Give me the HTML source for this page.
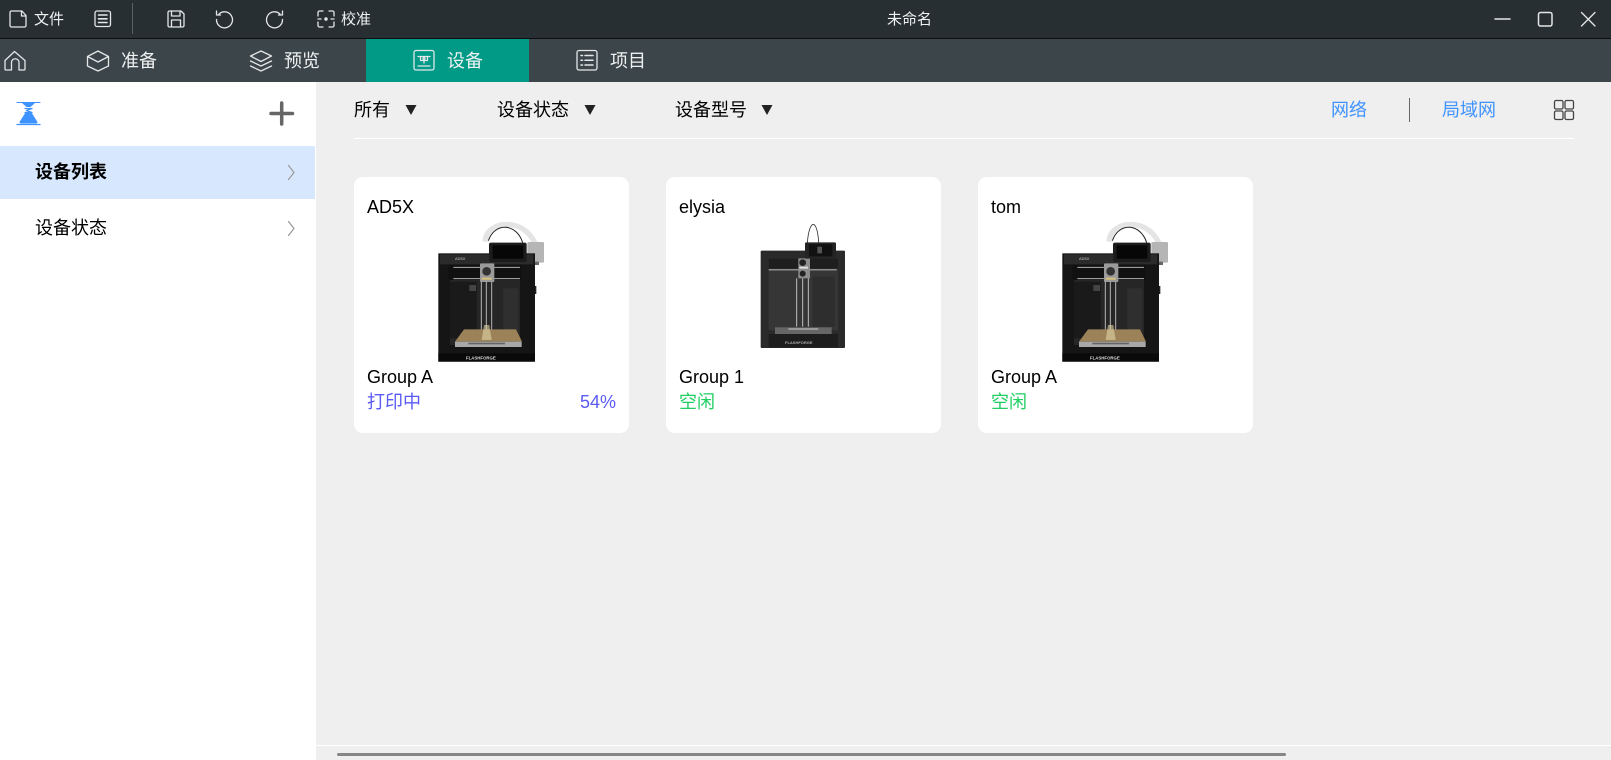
<!DOCTYPE html>
<html lang="zh"><head><meta charset="utf-8"><title>未命名</title>
<style>
html,body{margin:0;padding:0;width:1611px;height:760px;overflow:hidden;background:#efefef;font-family:"Liberation Sans","Noto Sans CJK SC",sans-serif;}
.a{position:absolute;}
.t{position:absolute;white-space:nowrap;height:24px;line-height:24px;font-size:18px;color:#000;}
.w{color:#eef1f1;}
.s{font-size:15px;}
.b{color:#3f93ff;}
.card{position:absolute;top:177px;width:275px;height:256px;background:#fff;border-radius:9px;}
svg{position:absolute;overflow:visible;}
</style></head><body>
<div class="a" style="left:0;top:0;width:1611px;height:38px;background:#282f32"></div>
<div class="a" style="left:0;top:38px;width:1611px;height:1px;background:#0c0e0f"></div>
<div class="a" style="left:0;top:39px;width:1611px;height:43px;background:#3c4549"></div>
<div class="a" style="left:366px;top:39px;width:163px;height:43px;background:#009a87"></div>
<div class="a" style="left:0;top:82px;width:316px;height:678px;background:#fff"></div>
<div class="a" style="left:0;top:146px;width:315px;height:53px;background:#d7e7fd"></div>
<div class="a" style="left:354px;top:138px;width:1220px;height:1px;background:#fff"></div>
<div class="a" style="left:316px;top:745px;width:1295px;height:1px;background:#fff"></div>
<div class="a" style="left:337px;top:753px;width:949px;height:3px;background:#868686;border-radius:2px"></div>
<div class="a" style="left:1409px;top:98px;width:1px;height:24px;background:#666"></div>
<div class="a" style="left:132px;top:3px;width:1px;height:31px;background:#5a6164"></div>

<svg width="1611" height="240" style="left:0;top:0" fill="none" stroke="#e4e7e7" stroke-width="1.3" stroke-linejoin="round" stroke-linecap="round">
<path d="M12 11H22L26 15.500V25.500A1.500 1.500 0 0 1 24.500 27H11.500A1.500 1.500 0 0 1 10 25.500V12.500A1.500 1.500 0 0 1 11.500 11ZM21.500 11V16H26"/>
<rect x="95" y="11" width="15.500" height="15.500" rx="2"/><path d="M98.500 15H107M98.500 18.800H107M98.500 22.500H107" stroke-width="1.600"/>
<path d="M169.500 11H181L184 14V25.500A1.500 1.500 0 0 1 182.500 27H169.500A1.500 1.500 0 0 1 168 25.500V12.500A1.500 1.500 0 0 1 169.500 11ZM171.500 11V16H180V11M171.500 27V20H180.500V27"/>
<path d="M219 14A8 8 0 1 1 216.500 19.500M216.500 11V15H220.500"/>
<path d="M280 14A8 8 0 1 0 282.500 19.500M282.500 11V15H278.500"/>
<path d="M323 11H319.500A1.500 1.500 0 0 0 318 12.500V16M329 11H332.500A1.500 1.500 0 0 1 334 12.500V16M323 27H319.500A1.500 1.500 0 0 1 318 25.500V22M329 27H332.500A1.500 1.500 0 0 0 334 25.500V22M318 19H321M331 19H334"/>
<circle cx="326" cy="19" r="1.100" fill="#e4e7e7"/>
<path d="M1495 19H1510" stroke-width="1.500"/>
<rect x="1538.500" y="12.500" width="13.500" height="13.500" rx="2" stroke-width="1.500"/>
<path d="M1581.500 12.500L1595 26M1595 12.500L1581.500 26" stroke-width="1.300"/>
<path d="M5 60.500L14.500 51.500L25 60.500V69A1 1 0 0 1 24 70H19V62.500A3.500 3.500 0 0 0 11.500 62.500V70H6A1 1 0 0 1 5 69Z"/>
<path d="M98 51L108.500 56.500V66L98 71L87.500 66V56.500ZM87.500 56.500L98 62L108.500 56.500"/>
<path d="M261 51L271.500 56L261 61.500L250.500 56ZM250.500 61L261 66L271.500 61M250.500 66L261 71L271.500 66"/>
<rect x="414" y="50.500" width="20" height="19.500" rx="2"/>
<path d="M418 56.500H430M420.500 56.500V60.500H427.500V56.500M424 60.500V63M418 66H430"/>
<circle cx="424" cy="58.500" r="1"/>
<rect x="577" y="50.500" width="20" height="19.500" rx="2"/>
<path d="M581 55.500H582.500M585 55.500H593M581 60.300H582.500M585 60.300H593M581 65H582.500M585 65H593" stroke-width="1.500"/>
<path d="M17 102.500H40" stroke="#3f93ff" stroke-width="1"/>
<path d="M17 124.500H40" stroke="#3f93ff" stroke-width="1.300"/>
<path d="M22 103H35L30.500 107H26.500Z" fill="#3f93ff" stroke="none"/>
<path d="M25 108.500H32L26.500 110.500L32 112.500H25" stroke="#3f93ff" stroke-width="1.300"/>
<path d="M25.500 112.500H31.500L37.500 122Q37.500 123.500 36 123.500H21Q19.500 123.500 19.500 122Z" fill="#3f93ff" stroke="none"/>
<path d="M271 113.500H292.500M281.700 103V124" stroke="#666" stroke-width="3.500"/>
<path d="M288.500 165.500L294 172.500L288.500 179.500M288.500 221.500L294 228.500L288.500 235.500" stroke="#999" stroke-width="1.200"/>
<rect x="1554.500" y="100.500" width="8.500" height="8.500" rx="1.500" stroke="#444"/>
<rect x="1565" y="100.500" width="8.500" height="8.500" rx="1.500" stroke="#444"/>
<rect x="1554.500" y="111" width="8.500" height="8.500" rx="1.500" stroke="#444"/>
<rect x="1565" y="111" width="8.500" height="8.500" rx="1.500" stroke="#444"/>
<path d="M405.500 105H416.500L411 115ZM584.500 105H595.500L590 115ZM761.500 105H772.500L767 115Z" fill="#222" stroke="none"/>
</svg>

<span class="t w s" style="left:34px;top:8px">文件</span>
<span class="t w s" style="left:341px;top:8px">校准</span>
<span class="t w s" style="left:887px;top:8px">未命名</span>
<span class="t w" style="left:121px;top:49px">准备</span>
<span class="t w" style="left:284px;top:49px">预览</span>
<span class="t w" style="left:447px;top:49px">设备</span>
<span class="t w" style="left:610px;top:49px">项目</span>
<span class="t" style="left:35px;top:160px;font-weight:bold">设备列表</span>
<span class="t" style="left:35px;top:216px">设备状态</span>
<span class="t" style="left:354px;top:98px">所有</span>
<span class="t" style="left:497px;top:98px">设备状态</span>
<span class="t" style="left:675px;top:98px">设备型号</span>
<span class="t b" style="left:1331px;top:98px">网络</span>
<span class="t b" style="left:1442px;top:98px">局域网</span>

<div class="card" style="left:354px"></div>
<div class="card" style="left:666px"></div>
<div class="card" style="left:978px"></div>

<span class="t" style="left:367px;top:195px">AD5X</span>
<span class="t" style="left:367px;top:365px">Group A</span>
<span class="t" style="left:367px;top:390px;color:#5a5af5">打印中</span>
<span class="t" style="left:580px;top:390px;color:#5a5af5;width:36px;text-align:right">54%</span>
<span class="t" style="left:679px;top:195px">elysia</span>
<span class="t" style="left:679px;top:365px">Group 1</span>
<span class="t" style="left:679px;top:390px;color:#1fcf62">空闲</span>
<span class="t" style="left:991px;top:195px">tom</span>
<span class="t" style="left:991px;top:365px">Group A</span>
<span class="t" style="left:991px;top:390px;color:#1fcf62">空闲</span>

<svg style="left:420px;top:210px" width="130" height="155" viewBox="0 0 390 465">
<path d="M195 95C200 30 310 20 345 100" fill="none" stroke="#e4e4e4" stroke-width="16"/>
<path d="M205 92C225 35 290 40 308 98" fill="none" stroke="#222" stroke-width="3"/>
<rect x="322" y="96" width="50" height="62" rx="4" fill="#b5b5b5"/>
<rect x="345" y="155" width="12" height="10" fill="#666"/>
<rect x="55" y="130" width="290" height="325" fill="#151515"/>
<rect x="90" y="165" width="210" height="240" fill="#262626"/>
<rect x="90" y="215" width="80" height="170" fill="#1a1a1a"/>
<rect x="250" y="235" width="45" height="130" fill="#2f2f2f"/>
<rect x="60" y="133" width="280" height="30" fill="#2b2b2b"/>
<text x="105" y="150" font-size="12" fill="#ccc" font-family="Liberation Sans">AD5X</text>
<rect x="85" y="165" width="220" height="45" fill="#111"/>
<path d="M100 172H300M100 206H300" stroke="#b0b0b0" stroke-width="3"/>
<rect x="180" y="160" width="43" height="56" rx="3" fill="#9a9a9a"/>
<circle cx="200" cy="184" r="13" fill="#333"/>
<rect x="185" y="203" width="30" height="6" fill="#d8c27a"/>
<path d="M184 215V370M199 215V375M215 215V370" stroke="#b5b5b5" stroke-width="3"/>
<rect x="148" y="225" width="20" height="18" fill="#444"/>
<path d="M105 395L132 358H288L306 395Z" fill="#9c8258"/>
<path d="M185 390L192 345H208L215 390Z" fill="#e2d3a5" opacity=".6"/>
<rect x="105" y="395" width="200" height="16" fill="#a8a8a8"/>
<rect x="145" y="398" width="110" height="5" fill="#666"/>
<rect x="55" y="430" width="290" height="25" fill="#0a0a0a"/>
<text x="138" y="449" font-size="13" font-weight="bold" fill="#ddd" font-family="Liberation Sans">FLASHFORGE</text>
<rect x="207" y="98" width="113" height="58" rx="6" fill="#1c1c1c"/>
<rect x="218" y="106" width="92" height="40" fill="#070707"/>
<rect x="345" y="228" width="4" height="24" fill="#222"/>
</svg>

<svg style="left:1044px;top:210px" width="130" height="155" viewBox="0 0 390 465">
<path d="M195 95C200 30 310 20 345 100" fill="none" stroke="#e4e4e4" stroke-width="16"/>
<path d="M205 92C225 35 290 40 308 98" fill="none" stroke="#222" stroke-width="3"/>
<rect x="322" y="96" width="50" height="62" rx="4" fill="#b5b5b5"/>
<rect x="345" y="155" width="12" height="10" fill="#666"/>
<rect x="55" y="130" width="290" height="325" fill="#151515"/>
<rect x="90" y="165" width="210" height="240" fill="#262626"/>
<rect x="90" y="215" width="80" height="170" fill="#1a1a1a"/>
<rect x="250" y="235" width="45" height="130" fill="#2f2f2f"/>
<rect x="60" y="133" width="280" height="30" fill="#2b2b2b"/>
<text x="105" y="150" font-size="12" fill="#ccc" font-family="Liberation Sans">AD5X</text>
<rect x="85" y="165" width="220" height="45" fill="#111"/>
<path d="M100 172H300M100 206H300" stroke="#b0b0b0" stroke-width="3"/>
<rect x="180" y="160" width="43" height="56" rx="3" fill="#9a9a9a"/>
<circle cx="200" cy="184" r="13" fill="#333"/>
<rect x="185" y="203" width="30" height="6" fill="#d8c27a"/>
<path d="M184 215V370M199 215V375M215 215V370" stroke="#b5b5b5" stroke-width="3"/>
<rect x="148" y="225" width="20" height="18" fill="#444"/>
<path d="M105 395L132 358H288L306 395Z" fill="#9c8258"/>
<path d="M185 390L192 345H208L215 390Z" fill="#e2d3a5" opacity=".6"/>
<rect x="105" y="395" width="200" height="16" fill="#a8a8a8"/>
<rect x="145" y="398" width="110" height="5" fill="#666"/>
<rect x="55" y="430" width="290" height="25" fill="#0a0a0a"/>
<text x="138" y="449" font-size="13" font-weight="bold" fill="#ddd" font-family="Liberation Sans">FLASHFORGE</text>
<rect x="207" y="98" width="113" height="58" rx="6" fill="#1c1c1c"/>
<rect x="218" y="106" width="92" height="40" fill="#070707"/>
<rect x="345" y="228" width="4" height="24" fill="#222"/>
</svg>

<svg style="left:730px;top:210px" width="130" height="155" viewBox="0 0 390 465">
<path d="M232 98C238 25 262 25 266 98" fill="none" stroke="#333" stroke-width="2.500"/>
<rect x="92" y="122" width="253" height="292" rx="3" fill="#2a2a2a"/>
<rect x="116" y="146" width="208" height="215" fill="#363636"/>
<rect x="116" y="146" width="208" height="30" fill="#1e1e1e"/>
<rect x="248" y="200" width="66" height="150" fill="#2e2e2e"/>
<rect x="116" y="178" width="204" height="3" fill="#b8b8b8"/>
<rect x="205" y="145" width="35" height="60" fill="#8c8c8c"/>
<circle cx="218" cy="158" r="10" fill="#222"/>
<circle cx="218" cy="191" r="9" fill="#222"/>
<rect x="208" y="170" width="26" height="6" fill="#ddd"/>
<path d="M200 205V350M218 205V350M235 205V350" stroke="#c0c0c0" stroke-width="3"/>
<rect x="135" y="352" width="170" height="20" fill="#666"/>
<rect x="175" y="354" width="90" height="6" fill="#999"/>
<rect x="116" y="372" width="208" height="40" fill="#1d1d1d"/>
<text x="165" y="402" font-size="12" font-weight="bold" fill="#aaa" font-family="Liberation Sans">FLASHFORGE</text>
<rect x="225" y="97" width="93" height="49" rx="4" fill="#242424"/>
<rect x="237" y="103" width="70" height="36" fill="#111"/>
<rect x="262" y="110" width="14" height="20" fill="#555"/>
</svg>
</body></html>
